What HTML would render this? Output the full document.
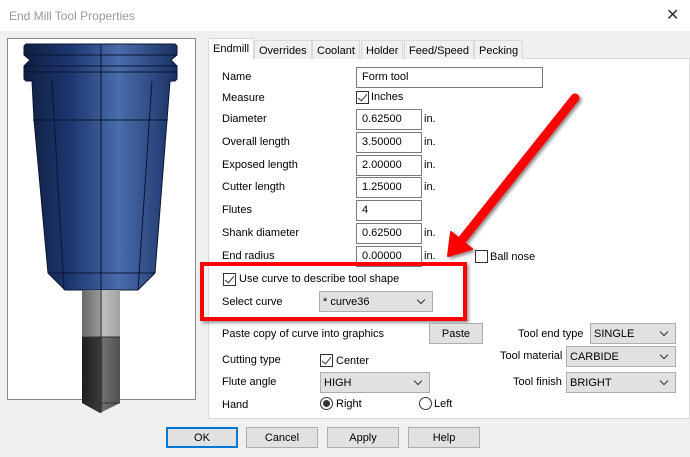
<!DOCTYPE html>
<html><head><style>
*{box-sizing:border-box}
body{margin:0;width:690px;height:457px;background:#f0f0f0;font-family:"Liberation Sans",sans-serif;font-size:11px;color:#000;position:relative;overflow:hidden}
.a{position:absolute;white-space:nowrap}
.tb{position:absolute;background:#fff;border:1px solid #7a7a7a;height:21px;padding:3px 0 0 5px}
.dd{position:absolute;background:#e1e1e1;border:1px solid #adadad;height:21px;padding:4px 0 0 3px}
.dd:after{content:"";position:absolute;right:8px;top:5px;width:5px;height:5px;border-right:1px solid #333;border-bottom:1px solid #333;transform:rotate(45deg)}
.cb{position:absolute;width:13px;height:13px;border:1px solid #333;background:#fff}
.cb.c:after{content:"";position:absolute;left:3px;top:0px;width:4px;height:8px;border-right:1.5px solid #333;border-bottom:1.5px solid #333;transform:rotate(40deg)}
.btn{position:absolute;background:#e1e1e1;border:1px solid #adadad;height:21px;text-align:center;padding-top:4px}
.tab{position:absolute;top:40px;height:19px;border:1px solid #d9d9d9;border-bottom:none;background:#f0f0f0;padding:4px 4px 0}
</style></head><body>
<div class="a" style="left:0;top:0;width:690px;height:31px;background:#fff"></div>
<div class="a" style="left:9px;top:9px;font-size:12px;color:#999">End Mill Tool Properties</div>
<div class="a" style="left:666px;top:5px;font-size:16px;color:#333">✕</div>
<div class="a" style="left:7px;top:38px;width:189px;height:362px;background:#fff;border:1px solid #888"></div>
<svg class="a" style="left:0;top:0" width="200" height="420">
<defs><linearGradient id="b" x1="0" x2="1"><stop offset="0" stop-color="#0f1f40"/><stop offset=".3" stop-color="#1d3670"/><stop offset=".62" stop-color="#4a6cab"/><stop offset="1" stop-color="#1a3164"/></linearGradient>
<linearGradient id="g" x1="0" x2="1"><stop offset="0" stop-color="#6a6a6a"/><stop offset=".5" stop-color="#9a9a9a"/><stop offset=".55" stop-color="#c0c0c0"/><stop offset="1" stop-color="#a0a0a0"/></linearGradient>
<linearGradient id="k" x1="0" x2="1"><stop offset="0" stop-color="#1e1e1e"/><stop offset=".5" stop-color="#3a3a3a"/><stop offset=".55" stop-color="#707070"/><stop offset="1" stop-color="#505050"/></linearGradient></defs>
<path d="M24 46 L26 44 L175 44 L177 46 L177 55 L171 60 L177 66 L177 79 L175 81 L170 81 L167 120 L155 273 L138 290 L65 290 L48 273 L34 120 L32 81 L26 81 L24 79 L24 66 L30 60 L24 55 Z" fill="url(#b)" stroke="#0a1530"/>
<path d="M24 55 H177 M24 66 H177 M24 72 H177 M33 120 H168 M48 273 H155 M101 44 V290 M52 81 L64 290 M152 81 L138 290" stroke="#0a1530" fill="none" stroke-width="1"/>
<rect x="82" y="290" width="38" height="47" fill="url(#g)"/>
<path d="M82 337 H120 V403 L100 413 L82 403 Z" fill="url(#k)"/>
<path d="M101 290 V413 M82 337 H120 M82 403 H120" stroke="#333"/>
</svg>
<div class="a" style="left:208px;top:58px;width:482px;height:361px;background:#fff;border:1px solid #d9d9d9"></div>
<div class="tab" style="left:208px;top:38px;height:21px;background:#fff;border-color:#d9d9d9">Endmill</div>
<div class="tab" style="left:254px">Overrides</div>
<div class="tab" style="left:312px">Coolant</div>
<div class="tab" style="left:361px">Holder</div>
<div class="tab" style="left:404px">Feed/Speed</div>
<div class="tab" style="left:474px">Pecking</div>
<div class="a" style="left:222px;top:71px">Name</div>
<div class="tb" style="left:356px;top:67px;width:187px">Form tool</div>
<div class="a" style="left:222px;top:92px">Measure</div>
<div class="cb c" style="left:356px;top:91px"></div><div class="a" style="left:371px;top:91px">Inches</div>
<div class="a" style="left:222px;top:113px">Diameter</div><div class="tb" style="left:356px;top:109px;width:66px">0.62500</div><div class="a" style="left:424px;top:113px">in.</div>
<div class="a" style="left:222px;top:136px">Overall length</div><div class="tb" style="left:356px;top:132px;width:66px">3.50000</div><div class="a" style="left:424px;top:136px">in.</div>
<div class="a" style="left:222px;top:159px">Exposed length</div><div class="tb" style="left:356px;top:155px;width:66px">2.00000</div><div class="a" style="left:424px;top:159px">in.</div>
<div class="a" style="left:222px;top:181px">Cutter length</div><div class="tb" style="left:356px;top:177px;width:66px">1.25000</div><div class="a" style="left:424px;top:181px">in.</div>
<div class="a" style="left:222px;top:204px">Flutes</div><div class="tb" style="left:356px;top:200px;width:66px">4</div>
<div class="a" style="left:222px;top:227px">Shank diameter</div><div class="tb" style="left:356px;top:223px;width:66px">0.62500</div><div class="a" style="left:424px;top:227px">in.</div>
<div class="a" style="left:222px;top:250px">End radius</div><div class="tb" style="left:356px;top:246px;width:66px">0.00000</div><div class="a" style="left:424px;top:250px">in.</div>
<div class="cb" style="left:475px;top:250px"></div><div class="a" style="left:490px;top:251px">Ball nose</div>
<div class="cb c" style="left:223px;top:273px"></div><div class="a" style="left:239px;top:273px">Use curve to describe tool shape</div>
<div class="a" style="left:222px;top:296px">Select curve</div><div class="dd" style="left:319px;top:291px;width:114px">* curve36</div>
<div class="a" style="left:200px;top:262px;width:267px;height:59px;border:4px solid #f00;box-shadow:2px 2px 3px rgba(0,0,0,.4)"></div>
<div class="a" style="left:222px;top:328px">Paste copy of curve into graphics</div>
<div class="btn" style="left:429px;top:323px;width:54px">Paste</div>
<div class="a" style="left:518px;top:328px">Tool end type</div><div class="dd" style="left:590px;top:323px;width:86px">SINGLE</div>
<div class="a" style="left:500px;top:350px">Tool material</div><div class="dd" style="left:566px;top:346px;width:110px">CARBIDE</div>
<div class="a" style="left:513px;top:376px">Tool finish</div><div class="dd" style="left:566px;top:372px;width:110px">BRIGHT</div>
<div class="a" style="left:222px;top:354px">Cutting type</div>
<div class="cb c" style="left:320px;top:354px"></div><div class="a" style="left:336px;top:355px">Center</div>
<div class="a" style="left:222px;top:376px">Flute angle</div><div class="dd" style="left:320px;top:372px;width:110px">HIGH</div>
<div class="a" style="left:222px;top:399px">Hand</div>
<div class="a" style="left:320px;top:397px;width:13px;height:13px;border:1px solid #333;border-radius:50%;background:#fff"><div style="margin:2px;width:7px;height:7px;border-radius:50%;background:#333"></div></div>
<div class="a" style="left:336px;top:398px">Right</div>
<div class="a" style="left:419px;top:397px;width:13px;height:13px;border:1px solid #333;border-radius:50%;background:#fff"></div>
<div class="a" style="left:434px;top:398px">Left</div>
<div class="btn" style="left:166px;top:427px;width:72px;border:2px solid #0078d7;padding-top:3px">OK</div>
<div class="btn" style="left:246px;top:427px;width:72px">Cancel</div>
<div class="btn" style="left:327px;top:427px;width:72px">Apply</div>
<div class="btn" style="left:408px;top:427px;width:72px">Help</div>
<svg class="a" style="left:0;top:0;pointer-events:none" width="690" height="457">
<filter id="s"><feDropShadow dx="2" dy="2" stdDeviation="1.5" flood-opacity=".45"/></filter>
<g filter="url(#s)" fill="#f00" stroke="#f00">
<line x1="575" y1="98" x2="458" y2="245" stroke-width="9" stroke-linecap="round"/>
<path d="M448 256 L451 232 L472 249 Z" stroke-width="2" stroke-linejoin="round"/>
</g></svg>
</body></html>
